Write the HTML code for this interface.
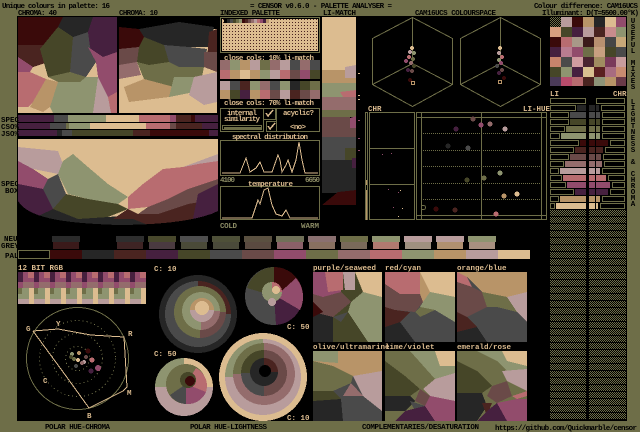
<!DOCTYPE html>
<html><head><meta charset="utf-8"><style>
html,body{margin:0;padding:0;background:#6e6e48;}
svg{display:block}
text{font-family:"Liberation Mono","DejaVu Sans Mono",monospace;font-size:7.5px;font-weight:bold;}
.k{fill:#000}.p{fill:#dcbc90}.o{fill:#8a8a64}
</style></head><body>
<svg width="640" height="432" viewBox="0 0 640 432" xmlns="http://www.w3.org/2000/svg" shape-rendering="crispEdges">
<defs>
<pattern id="chk" width="2" height="2" patternUnits="userSpaceOnUse"><rect width="2" height="2" fill="#000"/><rect width="1" height="1" fill="#6e6e48"/><rect x="1" y="1" width="1" height="1" fill="#6e6e48"/></pattern>
<pattern id="dots" width="3" height="3" patternUnits="userSpaceOnUse"><rect width="3" height="3" fill="#dcbc90"/><rect x="1" y="1" width="1" height="1" fill="#4a2420"/></pattern>
<pattern id="stripe" width="36" height="7" patternUnits="userSpaceOnUse"><rect width="36" height="6" fill="url(#chk)"/><rect y="6" width="36" height="1" fill="#000"/></pattern>
</defs>
<rect width="640" height="432" fill="#6e6e48"/>
<rect x="17" y="16" width="610" height="405" fill="#000"/>

<text x="2" y="8" class="k" textLength="108">Unique colours in palette: 16</text>
<text x="250" y="8" class="k" textLength="142">= CENSOR v0.6.0 - PALETTE ANALYSER =</text>
<text x="534" y="8" class="k" textLength="104">Colour difference: CAM16UCS</text>
<text x="18" y="15" class="k" textLength="39">CHROMA: 40</text>
<text x="119" y="15" class="k" textLength="39">CHROMA: 10</text>
<text x="220" y="15" class="k" textLength="60">INDEXED PALETTE</text>
<text x="323" y="15" class="k" textLength="33">LI-MATCH</text>
<text x="415" y="15" class="k" textLength="81">CAM16UCS COLOURSPACE</text>
<text x="542" y="15" class="k" textLength="97">Illuminant: D(T=5500.00°K)</text>
<rect x="0" y="16" width="17" height="405" fill="#6e6e48"/>
<rect x="17" y="16" width="610" height="1" fill="#000"/>

<svg x="18" y="17" width="99" height="96" viewBox="0 0 99 96">
<rect width="99" height="96" fill="#dcbc90"/>
<polygon points="0,0 45,0 40,10 25,30 0,30" fill="#3a0a0a"/>
<polygon points="0,28 25,28 30,45 15,50 0,40" fill="#4a2420"/>
<polygon points="45,0 75,0 70,15 55,20 40,10" fill="#262626"/>
<polygon points="75,0 99,0 99,35 85,40 70,30 70,15" fill="#46203f"/>
<polygon points="40,10 55,20 52,55 30,60 22,32" fill="#464628"/>
<polygon points="55,20 70,15 72,30 78,45 68,60 52,55" fill="#4a4a4a"/>
<polygon points="70,30 85,40 99,35 99,75 90,80 80,60 78,45" fill="#924c6c"/>
<polygon points="0,40 15,50 12,55 0,60" fill="#924c6c"/>
<polygon points="0,55 12,55 28,62 22,78 10,90 0,90" fill="#b86c70"/>
<polygon points="28,62 40,65 32,90 25,95 12,90" fill="#b89468"/>
<polygon points="30,60 52,55 68,60 62,65 40,65" fill="#6e6e48"/>
<polygon points="40,65 62,65 68,60 80,60 75,96 35,96 32,90" fill="#8e9470"/>
<polygon points="80,60 90,80 99,75 99,96 75,96" fill="#b89c9c"/>
<polygon points="90,80 99,75 99,96 93,96" fill="#b86c70"/>
</svg>

<svg x="119" y="17" width="98" height="96" viewBox="0 0 98 96">
<rect width="98" height="96" fill="#dcbc90"/>
<rect width="98" height="12" fill="#000"/>
<polygon points="0,10 20,12 25,20 20,30 0,32" fill="#3a0a0a"/>
<polygon points="20,12 60,5 95,10 90,30 70,30 45,28 25,20" fill="#262626"/>
<polygon points="90,15 98,12 98,50 88,45" fill="#4a2420"/>
<polygon points="0,32 20,30 18,45 0,48" fill="#6a4a48"/>
<polygon points="20,30 25,20 45,28 50,45 30,48 18,45" fill="#464628"/>
<polygon points="45,28 70,30 88,32 85,50 60,50 50,45" fill="#4a4a4a"/>
<polygon points="85,35 98,35 98,55 85,50" fill="#6a4a48"/>
<polygon points="0,48 18,45 22,58 0,62" fill="#946c6c"/>
<polygon points="18,45 30,48 50,45 60,50 85,50 82,65 55,70 25,62" fill="#6e6e48"/>
<polygon points="25,62 55,70 50,80 10,85 5,70" fill="#b89468"/>
<polygon points="55,60 82,60 75,75 50,80" fill="#8e9470"/>
<polygon points="75,60 98,55 98,85 85,88 70,78" fill="#b89c9c"/>
</svg>

<rect x="18" y="115" width="200" height="7" fill="#46203f"/>
<rect x="54" y="115" width="14" height="7" fill="#4a4a4a"/><rect x="68" y="115" width="38" height="7" fill="#8e9470"/><rect x="106" y="115" width="33" height="7" fill="#dcbc90"/><rect x="139" y="115" width="31" height="7" fill="#b86c70"/><rect x="170" y="115" width="6" height="7" fill="#924c6c"/><rect x="176" y="115" width="15" height="7" fill="#4a2420"/><rect x="191" y="115" width="4" height="7" fill="#3a0a0a"/>
<rect x="18" y="123" width="200" height="6" fill="#46203f"/>
<rect x="50" y="123" width="16" height="6" fill="#4a4a4a"/><rect x="66" y="123" width="3" height="6" fill="#6e6e48"/><rect x="69" y="123" width="21" height="6" fill="#8e9470"/><rect x="90" y="123" width="56" height="6" fill="#dcbc90"/><rect x="146" y="123" width="24" height="6" fill="#b86c70"/><rect x="170" y="123" width="6" height="6" fill="#6a4a48"/><rect x="176" y="123" width="26" height="6" fill="#4a2420"/>
<rect x="18" y="130" width="200" height="6" fill="#46203f"/>
<rect x="57" y="130" width="5" height="6" fill="#262626"/><rect x="62" y="130" width="10" height="6" fill="#4a4a4a"/><rect x="72" y="130" width="61" height="6" fill="#464628"/><rect x="133" y="130" width="17" height="6" fill="#4a2420"/><rect x="150" y="130" width="59" height="6" fill="#3a0a0a"/>
<text x="1" y="122" class="k">SPEC</text><text x="1" y="129" class="k">CSO%</text><text x="1" y="136" class="k">JSO%</text>
<text x="1" y="186" class="k">SPEC</text><text x="5" y="193" class="k">BOX</text>

<svg x="18" y="139" width="200" height="86" viewBox="0 0 200 86">
<rect width="200" height="86" fill="#dcbc90"/>
<polygon points="0,8 40,12 45,25 40,35 15,30 0,22" fill="#b89c9c"/>
<polygon points="0,22 15,30 30,40 25,50 0,45" fill="#924c6c"/>
<polygon points="0,45 25,50 35,70 15,80 0,75" fill="#46203f"/>
<polygon points="30,40 40,35 48,55 55,70 35,70 25,50" fill="#4a4a4a"/>
<polygon points="40,35 45,22 55,15 70,28 90,45 110,58 100,65 70,60 50,55" fill="#8e9470"/>
<polygon points="48,55 70,60 100,65 110,70 90,78 60,80 35,70" fill="#464628"/>
<polygon points="10,82 35,70 60,80 90,78 130,75 130,86 0,86" fill="#262626"/>
<polygon points="110,58 125,45 145,30 165,28 180,25 200,22 200,40 170,50 150,60 130,68 110,70" fill="#b86c70"/>
<polygon points="165,28 200,15 200,22 180,25" fill="#b89c9c"/>
<polygon points="150,60 170,50 200,40 200,60 170,65 140,75 120,75 130,68" fill="#6a4a48"/>
<polygon points="110,70 120,75 140,75 170,65 200,60 200,86 130,86 115,80 95,80" fill="#4a2420"/>
<polygon points="180,55 200,45 200,86 175,80" fill="#46203f"/>
<path d="M0,62 C10,78 40,84 100,86 L0,86 Z" fill="#000"/>
<path d="M0,78 C20,82 50,86 100,86 C150,86 185,80 200,72 L200,86 L0,86 Z" fill="#000"/>
</svg>

<rect x="220.5" y="17.5" width="99" height="35" fill="none" stroke="#6e6e48"/>
<rect x="222" y="19" width="96" height="32" fill="url(#dots)"/>
<g>
<rect x="224" y="19" width="3" height="4" fill="#000"/><rect x="227" y="19" width="3" height="4" fill="#262626"/><rect x="230" y="19" width="3" height="4" fill="#4a4a4a"/><rect x="233" y="19" width="3" height="4" fill="#464628"/><rect x="236" y="19" width="3" height="4" fill="#6e6e48"/><rect x="239" y="19" width="3" height="4" fill="#8e9470"/><rect x="242" y="19" width="3" height="4" fill="#3a0a0a"/><rect x="245" y="19" width="3" height="4" fill="#4a2420"/><rect x="248" y="19" width="3" height="4" fill="#6a4a48"/><rect x="251" y="19" width="3" height="4" fill="#946c6c"/><rect x="254" y="19" width="3" height="4" fill="#b89c9c"/><rect x="257" y="19" width="3" height="4" fill="#b86c70"/><rect x="260" y="19" width="3" height="4" fill="#924c6c"/><rect x="263" y="19" width="3" height="4" fill="#46203f"/><rect x="266" y="19" width="3" height="4" fill="#b89468"/>
</g>
<text x="224" y="60" class="p" textLength="90">close cols: 10% li-match</text>
<g>
<rect x="220" y="60" width="10" height="10" fill="#946c6c"/><rect x="220" y="70" width="10" height="9" fill="#b86c70"/>
<rect x="230" y="60" width="10" height="10" fill="#8e9470"/><rect x="230" y="70" width="10" height="9" fill="#b89468"/>
<rect x="240" y="60" width="10" height="10" fill="#b89468"/><rect x="240" y="70" width="10" height="9" fill="#dcbc90"/>
<rect x="250" y="60" width="10" height="10" fill="#b89c9c"/><rect x="250" y="70" width="10" height="9" fill="#b89468"/>
<rect x="260" y="60" width="10" height="10" fill="#6e6e48"/><rect x="260" y="70" width="10" height="9" fill="#8e9470"/>
<rect x="270" y="60" width="10" height="10" fill="#946c6c"/><rect x="270" y="70" width="10" height="9" fill="#b89c9c"/>
<rect x="280" y="60" width="10" height="10" fill="#b89c9c"/><rect x="280" y="70" width="10" height="9" fill="#b86c70"/>
<rect x="290" y="60" width="10" height="10" fill="#4a4a4a"/><rect x="290" y="70" width="10" height="9" fill="#6a4a48"/>
<rect x="300" y="60" width="10" height="10" fill="#946c6c"/><rect x="300" y="70" width="10" height="9" fill="#924c6c"/>
<rect x="310" y="60" width="10" height="10" fill="#4a4a4a"/><rect x="310" y="70" width="10" height="9" fill="#464628"/>
<rect x="220" y="81" width="10" height="9" fill="#b89c9c"/><rect x="220" y="90" width="10" height="9" fill="#b89468"/>
<rect x="230" y="81" width="10" height="9" fill="#4a4a4a"/><rect x="230" y="90" width="10" height="9" fill="#464628"/>
<rect x="240" y="81" width="10" height="9" fill="#4a2420"/><rect x="240" y="90" width="10" height="9" fill="#46203f"/>
<rect x="250" y="81" width="10" height="9" fill="#8e9470"/><rect x="250" y="90" width="10" height="9" fill="#b89468"/>
<rect x="260" y="81" width="10" height="9" fill="#946c6c"/><rect x="260" y="90" width="10" height="9" fill="#b86c70"/>
<rect x="270" y="81" width="10" height="9" fill="#4a4a4a"/><rect x="270" y="90" width="10" height="9" fill="#6a4a48"/>
<rect x="280" y="81" width="10" height="9" fill="#8e9470"/><rect x="280" y="90" width="10" height="9" fill="#b89c9c"/>
<rect x="290" y="81" width="10" height="9" fill="#262626"/><rect x="290" y="90" width="10" height="9" fill="#4a2420"/>
<rect x="300" y="81" width="10" height="9" fill="#464628"/><rect x="300" y="90" width="10" height="9" fill="#6a4a48"/>
<rect x="310" y="81" width="10" height="9" fill="#6e6e48"/><rect x="310" y="90" width="10" height="9" fill="#946c6c"/>
</g>
<text x="224" y="105" class="p" textLength="90">close cols: 70% li-match</text>
<g fill="none" stroke="#6e6e48">
<rect x="220.5" y="108.5" width="43" height="23"/>
<rect x="263.5" y="108.5" width="12" height="11"/>
<rect x="266.5" y="121.5" width="10" height="10"/>
<rect x="276.5" y="108.5" width="43" height="23"/>
<rect x="222.5" y="125.5" width="39" height="4"/>
<rect x="220.5" y="140.5" width="99" height="35"/>
<rect x="220.5" y="186.5" width="99" height="33"/>
</g>
<rect x="224" y="127" width="37" height="2" fill="#6e6e48"/>
<text x="227" y="115" class="p" textLength="30">internal</text>
<text x="224" y="121" class="p" textLength="36">similarity</text>
<path d="M266,113 l2,3 l5,-6" stroke="#dcbc90" stroke-width="1.5" fill="none"/>
<path d="M268,126 l2,3 l5,-6" stroke="#dcbc90" stroke-width="1.5" fill="none"/>
<text x="283" y="115" class="p" textLength="31">acyclic?</text>
<text x="290" y="129" class="p" textLength="16">&lt;no&gt;</text>
<text x="232" y="139" class="p" textLength="76">spectral distribution</text>
<polyline fill="none" stroke="#dcbc90" points="222,173 240,173 246,158 250,172 256,168 260,162 264,172 272,172 278,155 280,160 282,172 286,165 288,160 292,172 296,160 299,142 302,160 305,173 318,173"/>
<text x="220" y="182" class="o" textLength="15">4100</text>
<text x="305" y="182" class="o" textLength="15">6650</text>
<text x="248" y="186" class="p" textLength="45">temperature</text>
<polyline fill="none" stroke="#dcbc90" points="222,218 252,218 258,200 260,204 264,190 268,188 272,205 276,214 282,216 286,210 290,218 318,218"/>
<text x="220" y="228" class="o" textLength="17">COLD</text>
<text x="301" y="228" class="o" textLength="18">WARM</text>

<g>
<rect x="322" y="17" width="34" height="53" fill="#dcbc90"/>
<rect x="322" y="70" width="34" height="13" fill="#b89468"/>
<polygon points="345,67 356,65 356,78 345,78" fill="#b89c9c"/>
<rect x="322" y="83" width="34" height="14" fill="#8e9470"/>
<polygon points="340,92 356,90 356,100 345,100" fill="#b86c70"/>
<rect x="322" y="97" width="34" height="13" fill="#946c6c"/>
<rect x="322" y="110" width="34" height="7" fill="#6e6e48"/>
<polygon points="350,118 356,116 356,128 350,128" fill="#924c6c"/>
<rect x="322" y="117" width="28" height="20" fill="#6a4a48"/>
<rect x="350" y="128" width="6" height="9" fill="#6a4a48"/>
<rect x="322" y="137" width="34" height="23" fill="#4a4a4a"/>
<rect x="345" y="148" width="11" height="12" fill="#464628"/>
<rect x="322" y="160" width="34" height="33" fill="#262626"/>
<rect x="352" y="158" width="4" height="10" fill="#46203f"/>
<polygon points="322,205 338,192 356,190 356,205" fill="#3a0a0a"/>
</g>
<g fill="#dcbc90"><rect x="358" y="73" width="2" height="1"/><rect x="358" y="95" width="2" height="1"/><rect x="358" y="99" width="2" height="1"/></g>
<g fill="#924c6c"><rect x="358" y="120" width="2" height="1"/><rect x="358" y="138" width="2" height="1"/><rect x="358" y="150" width="2" height="1"/></g>

<g fill="none" stroke="#6e6e48">
<polygon points="412.5,17.5 452.5,38.5 452.5,84.5 412.5,106.5 372.5,84.5 372.5,38.5"/>
<line x1="412.5" y1="17.5" x2="412.5" y2="63.5"/><line x1="412.5" y1="63.5" x2="452.5" y2="84.5"/>
<line x1="412.5" y1="63.5" x2="372.5" y2="84.5"/>
<polygon points="500.5,17.5 540.5,38.5 540.5,84.5 500.5,106.5 460.5,84.5 460.5,38.5"/>
<line x1="500.5" y1="17.5" x2="500.5" y2="63.5"/><line x1="500.5" y1="63.5" x2="540.5" y2="84.5"/><line x1="500.5" y1="63.5" x2="460.5" y2="84.5"/>
</g>
<g>
<circle cx="412" cy="48" r="2" fill="#dcbc90"/><circle cx="410" cy="52" r="2" fill="#b89c9c"/><circle cx="414" cy="53" r="2" fill="#8e9470"/><circle cx="409" cy="57" r="2" fill="#b86c70"/><circle cx="413" cy="59" r="2" fill="#6e6e48"/><circle cx="406" cy="61" r="2" fill="#924c6c"/><circle cx="411" cy="63" r="2" fill="#946c6c"/><circle cx="414" cy="66" r="2" fill="#464628"/><circle cx="408" cy="70" r="2" fill="#46203f"/><circle cx="412" cy="71" r="2" fill="#6a4a48"/><circle cx="410" cy="80" r="2" fill="#3a0a0a"/>
<rect x="411.5" y="81.5" width="3" height="3" fill="none" stroke="#b89468"/>
<circle cx="500" cy="48" r="2" fill="#dcbc90"/><circle cx="499" cy="53" r="2" fill="#b89c9c"/><circle cx="502" cy="57" r="2" fill="#b86c70"/><circle cx="499" cy="60" r="2" fill="#8e9470"/><circle cx="501" cy="63" r="2" fill="#924c6c"/><circle cx="497" cy="66" r="2" fill="#4a4a4a"/><circle cx="502" cy="70" r="2" fill="#6a4a48"/><circle cx="499" cy="73" r="2" fill="#46203f"/><circle cx="504" cy="78" r="2" fill="#3a0a0a"/>
<rect x="498.5" y="80.5" width="3" height="3" fill="none" stroke="#b89468"/>
</g>

<text x="368" y="111" class="p">CHR</text>
<text x="523" y="111" class="p">LI-HUE</text>
<g fill="none" stroke="#6e6e48">
<rect x="365.5" y="112.5" width="2" height="107"/>
<rect x="369.5" y="112.5" width="45" height="107"/>
<line x1="369" y1="148.5" x2="414" y2="148.5"/><line x1="369" y1="184.5" x2="414" y2="184.5"/>
<rect x="416.5" y="112.5" width="130" height="107"/>
<line x1="421.5" y1="112" x2="421.5" y2="220"/><line x1="481.5" y1="112" x2="481.5" y2="220"/><line x1="541.5" y1="112" x2="541.5" y2="220"/>
<line x1="416" y1="117.5" x2="546" y2="117.5"/><line x1="416" y1="215.5" x2="546" y2="215.5"/>
</g>
<g stroke="#6e6e48" stroke-dasharray="1 1"><line x1="421" y1="133.5" x2="541" y2="133.5"/><line x1="421" y1="150.5" x2="541" y2="150.5"/><line x1="421" y1="166.5" x2="541" y2="166.5"/><line x1="421" y1="183.5" x2="541" y2="183.5"/><line x1="421" y1="199.5" x2="541" y2="199.5"/></g>
<rect x="366" y="180" width="1" height="5" fill="#b89468"/><rect x="366" y="190" width="1" height="30" fill="#b89468"/>
<g>
<circle cx="473" cy="119" r="2.5" fill="#6a4a48"/><circle cx="481" cy="125" r="2.5" fill="#924c6c"/><circle cx="490" cy="124" r="2.5" fill="#946c6c"/><circle cx="505" cy="129" r="2.5" fill="#b89c9c"/><circle cx="456" cy="129" r="2.5" fill="#46203f"/>
<circle cx="448" cy="146" r="2.5" fill="#262626"/><circle cx="468" cy="148" r="2.5" fill="#4a4a4a"/>
<circle cx="500" cy="173" r="2.5" fill="#8e9470"/><circle cx="467" cy="180" r="2.5" fill="#464628"/><circle cx="484" cy="178" r="2.5" fill="#6e6e48"/>
<circle cx="504" cy="196" r="2.5" fill="#b89468"/><circle cx="517" cy="194" r="2.5" fill="#dcbc90"/>
<circle cx="436" cy="209" r="2.5" fill="#3a0a0a"/><circle cx="455" cy="210" r="2.5" fill="#4a2420"/><circle cx="496" cy="214" r="2.5" fill="#b86c70"/>
</g>
<path d="M421.5,205.5 h2 a2,2 0 0 1 0,4 h-2" fill="none" stroke="#6e6e48"/>
<g fill="#924c6c"><rect x="382" y="154" width="1" height="1"/><rect x="391" y="153" width="1" height="1"/><rect x="388" y="189" width="1" height="1"/><rect x="398" y="192" width="1" height="1"/><rect x="393" y="207" width="1" height="1"/></g>
<g fill="#dcbc90"><rect x="400" y="190" width="1" height="1"/><rect x="402" y="208" width="1" height="1"/><rect x="398" y="216" width="1" height="1"/></g>

<g>
<rect x="550" y="17" width="76" height="69" fill="#262626"/>
<rect x="550" y="17" width="11" height="10" fill="url(#chk)"/><rect x="561" y="17" width="11" height="10" fill="#b89c9c"/><rect x="572" y="17" width="11" height="10" fill="#3a0a0a"/><rect x="583" y="17" width="11" height="10" fill="#b89468"/><rect x="594" y="17" width="11" height="10" fill="#262626"/><rect x="605" y="17" width="11" height="10" fill="#dcbc90"/><rect x="616" y="17" width="10" height="10" fill="#924c6c"/>
<rect x="550" y="27" width="11" height="10" fill="#d8a080"/><rect x="561" y="27" width="11" height="10" fill="#464628"/><rect x="572" y="27" width="11" height="10" fill="#46203f"/><rect x="583" y="27" width="11" height="10" fill="#b89c9c"/><rect x="594" y="27" width="11" height="10" fill="#4a2420"/><rect x="605" y="27" width="11" height="10" fill="#c88c8c"/><rect x="616" y="27" width="10" height="10" fill="#8e9470"/>
<rect x="550" y="37" width="11" height="10" fill="#3a0a0a"/><rect x="561" y="37" width="11" height="10" fill="#b86c70"/><rect x="572" y="37" width="11" height="10" fill="#a89888"/><rect x="583" y="37" width="11" height="10" fill="#3a1a1a"/><rect x="594" y="37" width="11" height="10" fill="#b89070"/><rect x="605" y="37" width="11" height="10" fill="#464646"/><rect x="616" y="37" width="10" height="10" fill="#c8a878"/>
<rect x="550" y="47" width="11" height="10" fill="#46203f"/><rect x="561" y="47" width="11" height="10" fill="#b87c90"/><rect x="572" y="47" width="11" height="10" fill="#924c6c"/><rect x="583" y="47" width="11" height="10" fill="#6e6e48"/><rect x="594" y="47" width="11" height="10" fill="#c8a080"/><rect x="605" y="47" width="11" height="10" fill="#464628"/><rect x="616" y="47" width="10" height="10" fill="#4a4a4a"/>
<rect x="550" y="57" width="11" height="10" fill="#c8846c"/><rect x="561" y="57" width="11" height="10" fill="#4a4a4a"/><rect x="572" y="57" width="11" height="10" fill="#d09ca0"/><rect x="583" y="57" width="11" height="10" fill="#4a2430"/><rect x="594" y="57" width="11" height="10" fill="#a08c60"/><rect x="605" y="57" width="11" height="10" fill="#7a3a5a"/><rect x="616" y="57" width="10" height="10" fill="#c89c9c"/>
<rect x="550" y="67" width="11" height="10" fill="#464628"/><rect x="561" y="67" width="11" height="10" fill="#8e9470"/><rect x="572" y="67" width="11" height="10" fill="#46203f"/><rect x="583" y="67" width="11" height="10" fill="#d8c090"/><rect x="594" y="67" width="11" height="10" fill="#5a2020"/><rect x="605" y="67" width="11" height="10" fill="#a86c80"/><rect x="616" y="67" width="10" height="10" fill="#c88c70"/>
<rect x="550" y="77" width="11" height="9" fill="#4a3a58"/><rect x="561" y="77" width="11" height="9" fill="#b84c6c"/><rect x="572" y="77" width="11" height="9" fill="#b86c70"/><rect x="583" y="77" width="11" height="9" fill="#4a2420"/><rect x="594" y="77" width="11" height="9" fill="#8e9478"/><rect x="605" y="77" width="11" height="9" fill="#b89468"/><rect x="616" y="77" width="10" height="9" fill="#6a3a48"/>
</g>
<text x="550" y="96" class="p">LI</text><text x="613" y="96" class="p">CHR</text>
<g fill="none" stroke="#6e6e48">
<rect x="550.5" y="98.5" width="35" height="5"/><rect x="596.5" y="98.5" width="28" height="5"/>
</g>
<g>
<rect x="577" y="105" width="9" height="6" fill="#262626"/><rect x="589" y="105" width="6" height="6" fill="#262626"/><rect x="596" y="105" width="3" height="6" fill="#262626"/>
<rect x="570" y="112" width="16" height="6" fill="#4a4a4a"/><rect x="589" y="112" width="6" height="6" fill="#4a4a4a"/><rect x="596" y="112" width="4" height="6" fill="#4a4a4a"/>
<rect x="570" y="119" width="16" height="6" fill="#464628"/><rect x="589" y="119" width="6" height="6" fill="#464628"/><rect x="596" y="119" width="4" height="6" fill="#464628"/>
<rect x="566" y="126" width="20" height="6" fill="#6e6e48"/><rect x="589" y="126" width="6" height="6" fill="#6e6e48"/><rect x="596" y="126" width="4" height="6" fill="#6e6e48"/>
<rect x="561" y="133" width="25" height="6" fill="#8e9470"/><rect x="589" y="133" width="6" height="6" fill="#8e9470"/><rect x="596" y="133" width="4" height="6" fill="#8e9470"/>
<rect x="580" y="140" width="6" height="6" fill="#3a0a0a"/><rect x="589" y="140" width="6" height="6" fill="#3a0a0a"/><rect x="596" y="140" width="12" height="6" fill="#3a0a0a"/>
<rect x="575" y="147" width="11" height="6" fill="#4a2420"/><rect x="589" y="147" width="6" height="6" fill="#4a2420"/><rect x="596" y="147" width="7" height="6" fill="#4a2420"/>
<rect x="570" y="154" width="16" height="6" fill="#6a4a48"/><rect x="589" y="154" width="6" height="6" fill="#6a4a48"/><rect x="596" y="154" width="5" height="6" fill="#6a4a48"/>
<rect x="565" y="161" width="21" height="6" fill="#946c6c"/><rect x="589" y="161" width="6" height="6" fill="#946c6c"/><rect x="596" y="161" width="6" height="6" fill="#946c6c"/>
<rect x="560" y="168" width="26" height="6" fill="#b89c9c"/><rect x="589" y="168" width="6" height="6" fill="#b89c9c"/><rect x="596" y="168" width="4" height="6" fill="#b89c9c"/>
<rect x="563" y="175" width="23" height="6" fill="#b86c70"/><rect x="589" y="175" width="6" height="6" fill="#b86c70"/><rect x="596" y="175" width="10" height="6" fill="#b86c70"/>
<rect x="567" y="182" width="19" height="6" fill="#924c6c"/><rect x="589" y="182" width="6" height="6" fill="#924c6c"/><rect x="596" y="182" width="14" height="6" fill="#924c6c"/>
<rect x="575" y="189" width="11" height="6" fill="#46203f"/><rect x="589" y="189" width="6" height="6" fill="#46203f"/><rect x="596" y="189" width="12" height="6" fill="#46203f"/>
<rect x="560" y="196" width="26" height="6" fill="#b89468"/><rect x="589" y="196" width="6" height="6" fill="#b89468"/><rect x="596" y="196" width="4" height="6" fill="#b89468"/>
<rect x="556" y="203" width="30" height="6" fill="#dcbc90"/><rect x="589" y="203" width="6" height="6" fill="#dcbc90"/><rect x="596" y="203" width="2" height="6" fill="#dcbc90"/>
</g>
<g fill="none" stroke="#6e6e48">
<rect x="550.5" y="105.5" width="25" height="5"/><rect x="601.5" y="105.5" width="23" height="5"/>
<rect x="550.5" y="112.5" width="18" height="5"/><rect x="602.5" y="112.5" width="22" height="5"/>
<rect x="550.5" y="119.5" width="18" height="5"/><rect x="602.5" y="119.5" width="22" height="5"/>
<rect x="550.5" y="126.5" width="14" height="5"/><rect x="602.5" y="126.5" width="22" height="5"/>
<rect x="550.5" y="133.5" width="9" height="5"/><rect x="602.5" y="133.5" width="22" height="5"/>
<rect x="550.5" y="140.5" width="28" height="5"/><rect x="610.5" y="140.5" width="14" height="5"/>
<rect x="550.5" y="147.5" width="23" height="5"/><rect x="605.5" y="147.5" width="19" height="5"/>
<rect x="550.5" y="154.5" width="18" height="5"/><rect x="603.5" y="154.5" width="21" height="5"/>
<rect x="550.5" y="161.5" width="13" height="5"/><rect x="604.5" y="161.5" width="20" height="5"/>
<rect x="550.5" y="168.5" width="8" height="5"/><rect x="602.5" y="168.5" width="22" height="5"/>
<rect x="550.5" y="175.5" width="11" height="5"/><rect x="608.5" y="175.5" width="16" height="5"/>
<rect x="550.5" y="182.5" width="15" height="5"/><rect x="612.5" y="182.5" width="12" height="5"/>
<rect x="550.5" y="189.5" width="23" height="5"/><rect x="610.5" y="189.5" width="14" height="5"/>
<rect x="550.5" y="196.5" width="8" height="5"/><rect x="602.5" y="196.5" width="22" height="5"/>
<rect x="550.5" y="203.5" width="4" height="5"/><rect x="600.5" y="203.5" width="24" height="5"/>
</g>
<rect x="550" y="210" width="36" height="210" fill="url(#stripe)"/>
<rect x="589" y="210" width="37" height="210" fill="url(#stripe)"/>

<g text-anchor="middle">
<text x="633" y="23" class="k">U</text><text x="633" y="29" class="k">S</text><text x="633" y="35" class="k">E</text><text x="633" y="41" class="k">F</text><text x="633" y="47" class="k">U</text><text x="633" y="53" class="k">L</text>
<text x="633" y="65" class="k">M</text><text x="633" y="71" class="k">I</text><text x="633" y="77" class="k">X</text><text x="633" y="83" class="k">E</text><text x="633" y="89" class="k">S</text>
<text x="633" y="104" class="k">L</text><text x="633" y="110" class="k">I</text><text x="633" y="116" class="k">G</text><text x="633" y="122" class="k">H</text><text x="633" y="128" class="k">T</text><text x="633" y="134" class="k">N</text><text x="633" y="140" class="k">E</text><text x="633" y="146" class="k">S</text><text x="633" y="152" class="k">S</text>
<text x="633" y="164" class="k">&amp;</text>
<text x="633" y="176" class="k">C</text><text x="633" y="182" class="k">H</text><text x="633" y="188" class="k">R</text><text x="633" y="194" class="k">O</text><text x="633" y="200" class="k">M</text><text x="633" y="206" class="k">A</text>
</g>

<text x="4" y="241" class="k">NEU</text><text x="1" y="248" class="k">GREY</text><text x="5" y="258" class="k">PAL</text>
<g>
<rect x="52" y="236" width="28" height="6" fill="#2a2a2a"/><rect x="53" y="242" width="26" height="7" fill="#3a1a1a"/>
<rect x="116" y="236" width="28" height="6" fill="#2e2e2e"/><rect x="117" y="242" width="26" height="7" fill="#3e2424"/>
<rect x="148" y="236" width="28" height="6" fill="#48482c"/><rect x="149" y="242" width="26" height="7" fill="#4a3a40"/>
<rect x="180" y="236" width="28" height="6" fill="#4e4e4e"/><rect x="181" y="242" width="26" height="7" fill="#4a4a38"/>
<rect x="212" y="236" width="28" height="6" fill="#4e5038"/><rect x="213" y="242" width="26" height="7" fill="#4a4a3a"/>
<rect x="244" y="236" width="28" height="6" fill="#5a5040"/><rect x="245" y="242" width="26" height="7" fill="#5a4a40"/>
<rect x="276" y="236" width="28" height="6" fill="#707058"/><rect x="277" y="242" width="26" height="7" fill="#8a6068"/>
<rect x="308" y="236" width="28" height="6" fill="#8a7070"/><rect x="309" y="242" width="26" height="7" fill="#887060"/>
<rect x="340" y="236" width="28" height="6" fill="#6e6e48"/><rect x="341" y="242" width="26" height="7" fill="#7a6a5a"/>
<rect x="372" y="236" width="28" height="6" fill="#8e9470"/><rect x="373" y="242" width="26" height="7" fill="#b07a70"/>
<rect x="404" y="236" width="28" height="6" fill="#b89c9c"/><rect x="405" y="242" width="26" height="7" fill="#a09080"/>
<rect x="436" y="236" width="28" height="6" fill="#b89c9c"/><rect x="437" y="242" width="26" height="7" fill="#b09070"/>
<rect x="468" y="236" width="28" height="6" fill="#8e9470"/><rect x="469" y="242" width="26" height="7" fill="#a89080"/>
</g>
<g>
<rect x="18.5" y="250.5" width="31" height="8" fill="#000" stroke="#6e6e48"/>
<rect x="50" y="250" width="32" height="9" fill="#3a0a0a"/><rect x="82" y="250" width="32" height="9" fill="#262626"/><rect x="114" y="250" width="32" height="9" fill="#4a2420"/><rect x="146" y="250" width="32" height="9" fill="#46203f"/><rect x="178" y="250" width="32" height="9" fill="#464628"/><rect x="210" y="250" width="32" height="9" fill="#4a4a4a"/><rect x="242" y="250" width="32" height="9" fill="#6a4a48"/><rect x="274" y="250" width="32" height="9" fill="#924c6c"/><rect x="306" y="250" width="32" height="9" fill="#6e6e48"/><rect x="338" y="250" width="32" height="9" fill="#946c6c"/><rect x="370" y="250" width="32" height="9" fill="#b86c70"/><rect x="402" y="250" width="32" height="9" fill="#8e9470"/><rect x="434" y="250" width="32" height="9" fill="#b89468"/><rect x="466" y="250" width="32" height="9" fill="#b89c9c"/><rect x="498" y="250" width="32" height="9" fill="#dcbc90"/>
</g>

<text x="18" y="270" class="p">12 BIT RGB</text>
<svg x="18" y="272" width="128" height="32" viewBox="0 0 128 32">
<rect width="128" height="32" fill="#8e9470"/>
<g id="tile">
<rect width="16" height="16" fill="#924c6c"/><rect width="5" height="10" fill="#46203f"/><rect x="10" width="6" height="6" fill="#b86c70"/><rect x="5" y="10" width="11" height="6" fill="#946c6c"/>
<rect y="16" width="16" height="16" fill="#8e9470"/><rect x="11" y="16" width="5" height="16" fill="#dcbc90"/><rect y="16" width="4" height="6" fill="#6e6e48"/><rect y="27" width="11" height="5" fill="#b89c9c"/>
</g>
<use href="#tile" x="16"/><use href="#tile" x="32"/><use href="#tile" x="48"/><use href="#tile" x="64"/><use href="#tile" x="80"/><use href="#tile" x="96"/><use href="#tile" x="112"/>
</svg>

<g fill="none">
<circle cx="77.5" cy="358.5" r="51" stroke="#6e6e48"/>
<circle cx="77.5" cy="358.5" r="38" stroke="#6e6e48" stroke-dasharray="1 3"/>
<circle cx="77.5" cy="358.5" r="25" stroke="#6e6e48" stroke-dasharray="1 3"/>
<circle cx="77.5" cy="358.5" r="12" stroke="#6e6e48" stroke-dasharray="1 3"/>
<polyline stroke="#dcbc90" points="33,331 58,329 91,335 124,337 127,387 123,391 89,408 66,376 33,331"/>
</g>
<text x="26" y="331" class="p">G</text><text x="56" y="326" class="p">Y</text><text x="128" y="336" class="p">R</text><text x="43" y="383" class="p">C</text><text x="127" y="395" class="p">M</text><text x="87" y="418" class="p">B</text>
<g>
<circle cx="72" cy="354" r="2" fill="#8e9470"/><circle cx="79" cy="353" r="2" fill="#b89468"/><circle cx="88" cy="351" r="2.5" fill="#3a0a0a"/><circle cx="86" cy="357" r="2" fill="#6a4a48"/><circle cx="74" cy="359" r="2" fill="#6e6e48"/><circle cx="78" cy="360" r="2" fill="#dcbc90"/><circle cx="84" cy="362" r="2" fill="#b89c9c"/><circle cx="92" cy="360" r="2.5" fill="#b86c70"/><circle cx="82" cy="363" r="2" fill="#946c6c"/><circle cx="76" cy="366" r="2" fill="#4a4a4a"/><circle cx="98" cy="368" r="3" fill="#924c6c"/><circle cx="91" cy="371" r="2.5" fill="#46203f"/><circle cx="71" cy="357" r="2" fill="#464628"/>
</g>

<text x="154" y="271" class="p">C: 10</text>
<g>
<circle cx="198" cy="314" r="39" fill="#262626"/>
<circle cx="198" cy="314" r="33" fill="#4a4a4a"/>
<path d="M198,281 A33,33 0 0 1 231,314 L198,314Z" fill="#4a2420"/>
<circle cx="200" cy="312" r="26" fill="#6e6e48"/>
<path d="M226,312 A26,26 0 0 1 200,338 L200,312Z" fill="#6a4a48"/>
<circle cx="201" cy="311" r="19" fill="#8e9470"/>
<path d="M220,311 A19,19 0 0 1 201,330 L201,311Z" fill="#946c6c"/>
<circle cx="202" cy="310" r="12" fill="#b89468"/>
<path d="M214,310 A12,12 0 0 1 202,322 A12,12 0 0 1 190,310 Z" fill="#b89c9c"/>
<circle cx="202" cy="308" r="7" fill="#dcbc90"/>
</g>
<g>
<circle cx="274" cy="296" r="29" fill="#4a4a4a"/>
<path d="M274,267 A29,29 0 0 1 303,296 L274,296Z" fill="#3a0a0a"/>
<path d="M303,296 A29,29 0 0 1 276,325 L274,296Z" fill="#46203f"/>
<path d="M274,267 A29,29 0 0 0 247,288 L274,296Z" fill="#464628"/>
<path d="M296,278 A29,29 0 0 1 300,310 L276,296Z" fill="#924c6c"/>
<circle cx="272" cy="292" r="10" fill="#8e9470"/>
<path d="M272,282 A10,10 0 0 1 282,292 L272,292Z" fill="#b86c70"/>
<circle cx="276" cy="290" r="4" fill="#dcbc90"/>
<circle cx="272" cy="302" r="4" fill="#b89c9c"/>
</g>
<text x="287" y="329" class="p">C: 50</text>
<text x="154" y="356" class="p">C: 50</text>
<g>
<circle cx="184" cy="387" r="29" fill="#8e9470"/>
<path d="M213,387 A29,29 0 0 1 155,387 Z" fill="#b89c9c"/>
<path d="M184,358 A29,29 0 0 1 213,387 L184,387Z" fill="#dcbc90"/>
<circle cx="186" cy="384" r="20" fill="#6e6e48"/>
<path d="M196,368 A20,20 0 0 1 206,392 L186,384Z" fill="#b86c70"/>
<path d="M206,392 A20,20 0 0 1 186,404 L186,384Z" fill="#924c6c"/>
<path d="M186,404 A20,20 0 0 1 170,395 L186,384Z" fill="#4a4a4a"/>
<circle cx="188" cy="380" r="8" fill="#464628"/>
<circle cx="190" cy="381" r="5" fill="#3a0a0a"/>
</g>
<g>
<circle cx="263" cy="377" r="44" fill="#dcbc90"/>
<circle cx="263" cy="377" r="38" fill="#b89c9c"/>
<path d="M225,377 A38,38 0 0 1 263,339 L263,377Z" fill="#8e9470"/>
<circle cx="264" cy="374" r="31" fill="#946c6c"/>
<path d="M233,374 A31,31 0 0 1 264,343 L264,374Z" fill="#6e6e48"/>
<circle cx="264" cy="373" r="23" fill="#6a4a48"/>
<path d="M241,373 A23,23 0 0 1 264,350 L264,373Z" fill="#464628"/>
<path d="M241,373 A23,23 0 0 0 264,396 L264,373Z" fill="#4a4a4a"/>
<circle cx="264" cy="372" r="14" fill="#262626"/>
<path d="M264,358 A14,14 0 0 1 278,372 L264,372Z" fill="#4a2420"/>
<circle cx="265" cy="371" r="6" fill="#000"/>
</g>
<text x="287" y="420" class="p">C: 10</text>

<svg x="313" y="272" width="69" height="70" viewBox="0 0 69 70">
<rect width="69" height="70" fill="#464628"/>
<polygon points="0,0 30,0 28,20 10,25 0,22" fill="#924c6c"/>
<polygon points="12,0 30,0 30,18 15,20" fill="#b86c70"/>
<polygon points="30,0 42,0 42,18 32,18" fill="#b89c9c"/>
<polygon points="42,0 69,0 69,25 50,20" fill="#dcbc90"/>
<polygon points="0,22 10,25 28,20 38,30 20,45 0,40" fill="#6a4a48"/>
<polygon points="38,30 50,20 69,25 69,70 55,70 35,40" fill="#8e9470"/>
<polygon points="0,40 20,45 20,70 0,70" fill="#262626"/>
<polygon points="20,45 35,40 28,50" fill="#4a4a4a"/>
<polygon points="0,30 10,40 0,45" fill="#3a0a0a"/>
</svg>
<svg x="385" y="272" width="70" height="70" viewBox="0 0 70 70">
<rect width="70" height="70" fill="#4a4a4a"/>
<polygon points="0,0 35,0 35,22 15,22 0,12" fill="#b86c70"/>
<polygon points="35,0 70,0 70,25 45,20" fill="#dcbc90"/>
<polygon points="35,0 45,20 38,30 35,22" fill="#b89468"/>
<polygon points="0,12 15,22 35,22 38,30 30,40 10,38 0,35" fill="#6a4a48"/>
<polygon points="38,30 45,20 70,25 70,50 50,38 35,35" fill="#8e9470"/>
<polygon points="30,40 35,35 50,38 35,45" fill="#6e6e48"/>
<polygon points="0,35 10,38 25,40 15,50 0,55" fill="#4a2420"/>
<polygon points="0,55 15,50 30,70 0,70" fill="#262626"/>
</svg>
<svg x="457" y="272" width="70" height="70" viewBox="0 0 70 70">
<rect width="70" height="70" fill="#4a4a4a"/>
<polygon points="0,0 70,0 70,20 50,25 25,20 10,5" fill="#b89468"/>
<polygon points="0,0 10,5 15,15 0,10" fill="#b86c70"/>
<polygon points="0,10 15,15 25,20 30,35 10,45 0,40" fill="#6a4a48"/>
<polygon points="50,25 70,20 70,50 60,40" fill="#b89c9c"/>
<polygon points="25,20 50,25 60,40 40,35 30,35" fill="#6e6e48"/>
<polygon points="0,40 10,45 20,55 0,60" fill="#4a2420"/>
<polygon points="0,60 20,55 30,70 0,70" fill="#262626"/>
</svg>
<svg x="313" y="351" width="69" height="70" viewBox="0 0 69 70">
<rect width="69" height="70" fill="#4a4a4a"/>
<polygon points="0,0 69,0 69,20 40,25 20,15 0,12" fill="#b89468"/>
<polygon points="0,0 25,0 25,12 0,10" fill="#8e9470"/>
<polygon points="0,10 20,15 40,25 38,32 20,40 0,40" fill="#6e6e48"/>
<polygon points="40,25 69,20 69,60 50,45" fill="#b89c9c"/>
<polygon points="38,32 50,45 30,45" fill="#946c6c"/>
<polygon points="0,40 20,40 28,48 0,50" fill="#464628"/>
<polygon points="0,50 28,48 30,70 0,70" fill="#262626"/>
</svg>
<svg x="385" y="351" width="70" height="70" viewBox="0 0 70 70">
<rect width="70" height="70" fill="#6e6e48"/>
<polygon points="25,0 70,0 70,22 50,28" fill="#8e9470"/>
<polygon points="50,0 70,0 70,15 55,15" fill="#dcbc90"/>
<polygon points="50,28 70,22 70,50 45,45 38,38" fill="#b89c9c"/>
<polygon points="0,10 20,25 35,38 25,45 0,45" fill="#464628"/>
<polygon points="35,38 45,45 40,55 30,50" fill="#6a4a48"/>
<polygon points="0,45 25,45 30,50 20,60 0,60" fill="#262626"/>
<polygon points="25,50 40,55 30,60" fill="#4a4a4a"/>
<polygon points="20,60 40,55 50,70 10,70" fill="#46203f"/>
<polygon points="45,45 70,50 70,70 50,70 40,55" fill="#924c6c"/>
</svg>
<svg x="457" y="351" width="70" height="70" viewBox="0 0 70 70">
<rect width="70" height="70" fill="#6e6e48"/>
<polygon points="20,0 70,0 70,18 50,20 40,10" fill="#8e9470"/>
<polygon points="45,0 70,0 70,15 50,10" fill="#dcbc90"/>
<polygon points="45,20 70,18 70,40 50,30" fill="#b89c9c"/>
<polygon points="0,10 20,20 35,35 25,42 0,42" fill="#464628"/>
<polygon points="35,35 50,30 55,45 40,52 30,45" fill="#6a4a48"/>
<polygon points="55,45 70,40 70,45 60,48" fill="#b86c70"/>
<polygon points="0,42 25,42 30,55 20,70 0,70" fill="#262626"/>
<polygon points="25,52 35,52 30,65" fill="#4a2420"/>
<polygon points="20,70 30,60 40,52 50,70" fill="#46203f"/>
<polygon points="40,52 60,48 70,48 70,70 50,70" fill="#924c6c"/>
</svg>
<text x="313" y="270" class="p">purple/seaweed</text>
<text x="385" y="270" class="p">red/cyan</text>
<text x="457" y="270" class="p">orange/blue</text>
<text x="313" y="349" class="p">olive/ultramarine</text>
<text x="385" y="349" class="p">lime/violet</text>
<text x="457" y="349" class="p">emerald/rose</text>

<rect x="0" y="421" width="640" height="11" fill="#6e6e48"/>
<text x="45" y="429" class="k" textLength="65">POLAR HUE-CHROMA</text>
<text x="190" y="429" class="k" textLength="77">POLAR HUE-LIGHTNESS</text>
<text x="362" y="429" class="k" textLength="117">COMPLEMENTARIES/DESATURATION</text>
<text x="495" y="430" class="k" textLength="142">https://github.com/Quickmarble/censor</text>
</svg>
</body></html>
